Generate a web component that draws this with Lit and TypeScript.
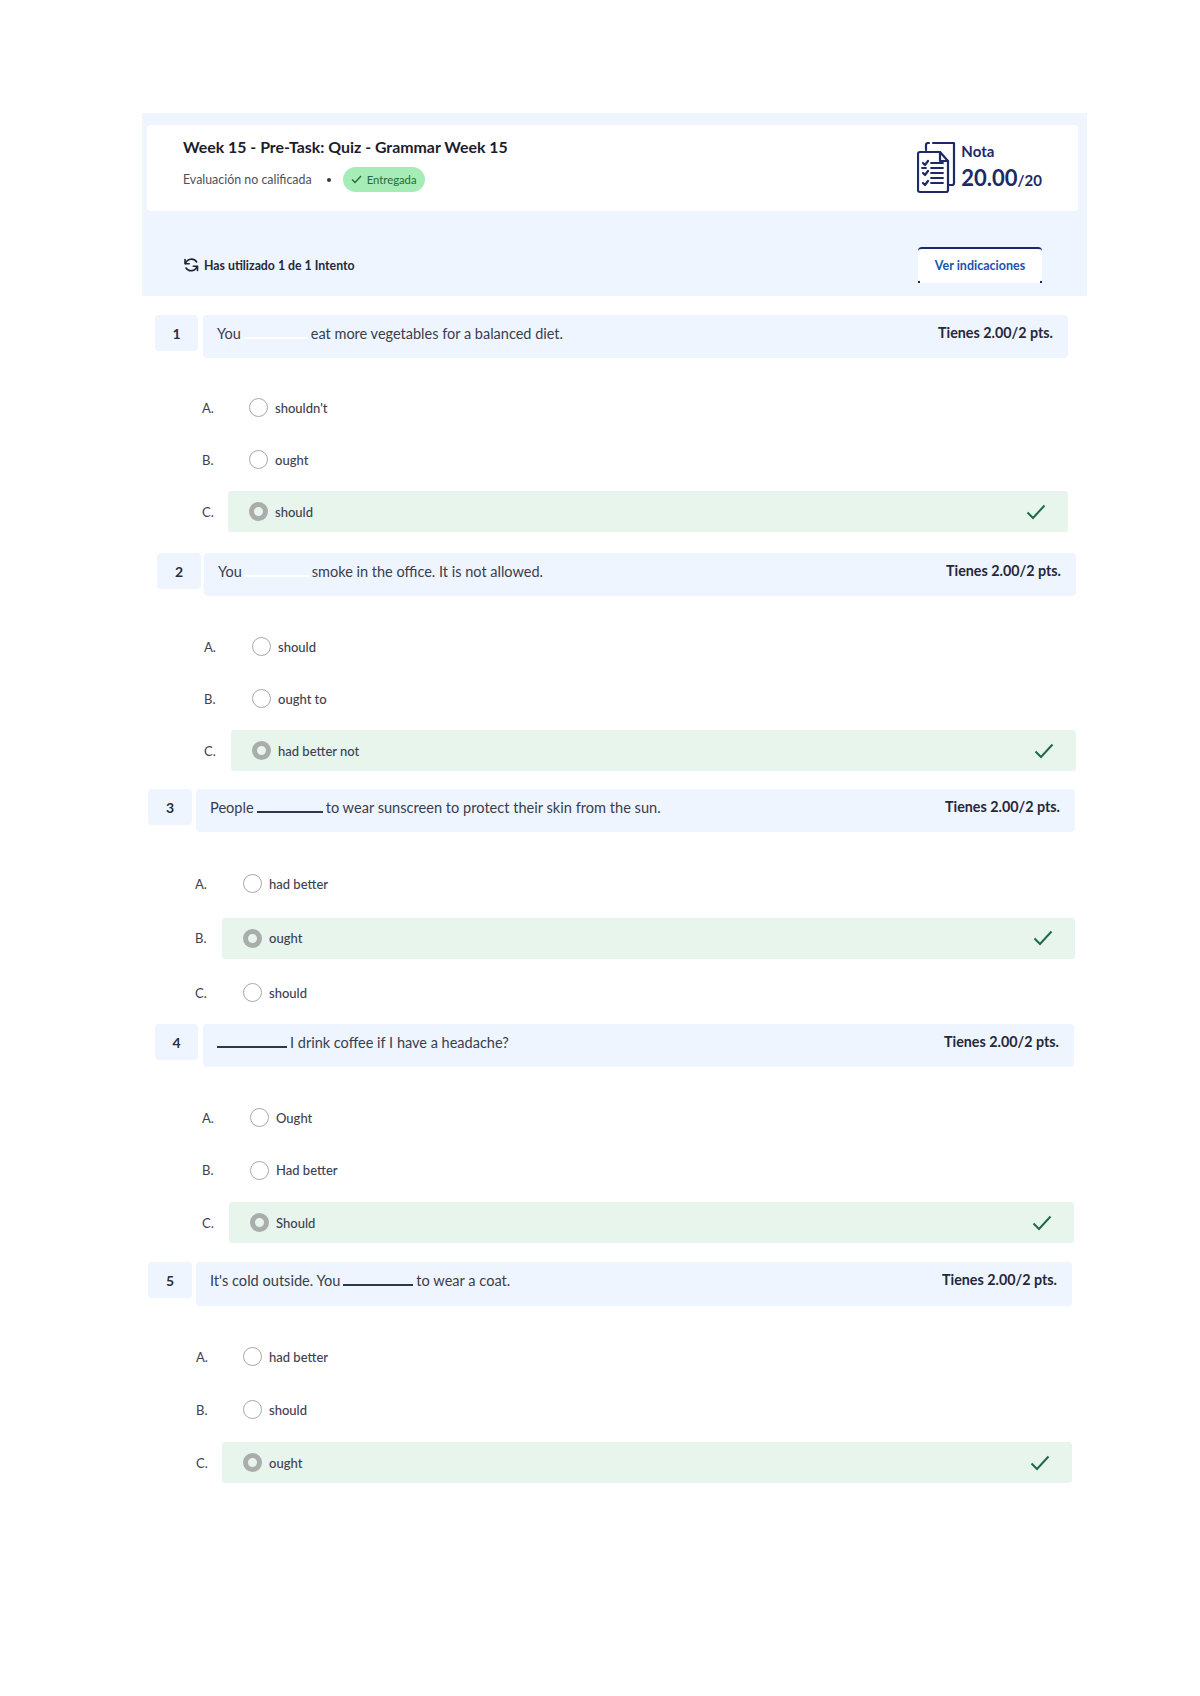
import { LitElement, html, css, svg } from 'lit';
import { customElement } from 'lit/decorators.js';

interface Option {
  letter: string;
  text: string;
  correct?: boolean;
}

interface Question {
  cls: string;
  before: string;
  after: string;
  blank: 'light' | 'dark';
  options: Option[];
}

const QUESTIONS: Question[] = [
  {
    cls: 'q1',
    before: 'You',
    after: 'eat more vegetables for a balanced diet.',
    blank: 'light',
    options: [
      { letter: 'A.', text: "shouldn't" },
      { letter: 'B.', text: 'ought' },
      { letter: 'C.', text: 'should', correct: true },
    ],
  },
  {
    cls: 'q2',
    before: 'You',
    after: 'smoke in the office. It is not allowed.',
    blank: 'light',
    options: [
      { letter: 'A.', text: 'should' },
      { letter: 'B.', text: 'ought to' },
      { letter: 'C.', text: 'had better not', correct: true },
    ],
  },
  {
    cls: 'q3',
    before: 'People',
    after: 'to wear sunscreen to protect their skin from the sun.',
    blank: 'dark',
    options: [
      { letter: 'A.', text: 'had better' },
      { letter: 'B.', text: 'ought', correct: true },
      { letter: 'C.', text: 'should' },
    ],
  },
  {
    cls: 'q4',
    before: '',
    after: 'I drink coffee if I have a headache?',
    blank: 'dark',
    options: [
      { letter: 'A.', text: 'Ought' },
      { letter: 'B.', text: 'Had better' },
      { letter: 'C.', text: 'Should', correct: true },
    ],
  },
  {
    cls: 'q5',
    before: "It's cold outside. You",
    after: 'to wear a coat.',
    blank: 'dark',
    options: [
      { letter: 'A.', text: 'had better' },
      { letter: 'B.', text: 'should' },
      { letter: 'C.', text: 'ought', correct: true },
    ],
  },
];

const gradeIcon = svg`
  <g fill="none" stroke="#1c2a66" stroke-width="2.2" stroke-linejoin="round" stroke-linecap="round">
    <path d="M9 9V4a2 2 0 0 1 2-2h1M16 2h21v40a2 2 0 0 1-2 2h-3" />
    <path d="M3 11h20l8 9v29a2 2 0 0 1-2 2H3a2 2 0 0 1-2-2V13a2 2 0 0 1 2-2z" />
    <path d="M23 11v9h8" />
    <path d="M6 22l2 2 3-4M6 32l2 2 3-4M6 42l2 2 3-4" />
    <path d="M14 22h12M14 32h12M14 42h12M5 27h4M14 27h12M14 37h12" stroke-width="1.8" />
  </g>
`;

const retryIcon = svg`
  <g fill="none" stroke="#1f2233" stroke-width="1.6" stroke-linecap="round" stroke-linejoin="round">
    <path d="M2.5 6.5A6.2 6.2 0 0 1 13.6 5" />
    <path d="M14 9.5A6.2 6.2 0 0 1 3 11" />
    <path d="M2 2.5v4.2h4.2M14.5 13.5V9.3h-4.2" />
  </g>
`;

@customElement('app-root')
export class AppRoot extends LitElement {
  static styles = css`
    :host {
      display: block;
      height: 1696px;
      background: #fff;
      font-family: 'Lato', 'Liberation Sans', sans-serif;
      color: #24273a;
      box-sizing: border-box;
      padding-top: 113px;
    }

    .panel {
      margin-left: 142px;
      width: 945px;
      height: 183px;
      box-sizing: border-box;
      background: #eef5fe;
      padding: 12px 9px 0 5px;
    }

    .card {
      display: flex;
      justify-content: space-between;
      height: 86px;
      box-sizing: border-box;
      background: #fff;
      border-radius: 4px;
      padding: 11px 36px 0 36px;
    }

    h1 {
      margin: 0;
      font-size: 15.9px;
      line-height: 22px;
      font-weight: 700;
      color: #1b1d2c;
    }

    .meta {
      display: flex;
      align-items: center;
      margin-top: 9px;
      font-size: 12.4px;
      color: #4d5060;
    }

    .dot {
      width: 4px;
      height: 4px;
      border-radius: 50%;
      background: #33364a;
      margin: 0 12px 0 15px;
    }

    .badge {
      display: flex;
      align-items: center;
      gap: 5px;
      height: 25px;
      padding: 0 8px;
      border-radius: 13px;
      background: #a5ecb6;
      color: #1f6b3d;
      font-size: 11.3px;
    }

    .grade {
      display: flex;
      gap: 5px;
      padding-top: 5px;
    }

    .grade-text {
      color: #1c2a66;
      font-weight: 700;
    }

    .grade-label {
      font-size: 15px;
      line-height: 19px;
      margin-top: 1px;
    }

    .grade-value {
      font-size: 22px;
      line-height: 30px;
      margin-top: 2px;
    }

    .grade-value small {
      font-size: 15px;
    }

    .attempts {
      display: flex;
      align-items: center;
      justify-content: space-between;
      padding: 36px 36px 0 36px;
    }

    .attempts-text {
      display: flex;
      align-items: center;
      gap: 5px;
      font-size: 12.3px;
      font-weight: 700;
      color: #26283a;
    }

    .btn {
      position: relative;
      width: 124px;
      height: 36px;
      box-sizing: border-box;
      padding: 0 0 2px;
      border: 0;
      border-top: 2px solid #1c2a66;
      border-radius: 4px 4px 0 0;
      background: #fff;
      color: #1a53ad;
      font: 700 12.5px 'Lato', 'Liberation Sans', sans-serif;
    }

    .btn::before,
    .btn::after {
      content: '';
      position: absolute;
      bottom: 0;
      width: 2px;
      height: 2px;
      background: #1c2a66;
    }

    .btn::before {
      left: 0;
    }

    .btn::after {
      right: 0;
    }

    .head {
      display: flex;
      gap: 5px;
      align-items: flex-start;
    }

    .num {
      flex: none;
      height: 36px;
      display: flex;
      align-items: center;
      justify-content: center;
      background: #eef5fe;
      border-radius: 4px;
      font-size: 14px;
      font-weight: 700;
      color: #2b2e40;
    }

    .bar {
      flex: 1;
      height: 43px;
      box-sizing: border-box;
      display: flex;
      justify-content: space-between;
      padding: 8px 15px 0 14px;
      background: #eef5fe;
      border-radius: 4px;
      font-size: 14.5px;
      line-height: 19px;
      color: #3a3d4e;
    }

    .blank {
      display: inline-block;
      width: 64px;
      height: 14px;
      margin: 0 3px;
      border-bottom: 2px solid #fff;
    }

    .blank.dark {
      border-bottom-color: #33364a;
    }

    .score {
      font-size: 14.3px;
      font-weight: 700;
      color: #26283a;
    }

    .options {
      display: flex;
      flex-direction: column;
    }

    .option {
      display: flex;
      align-items: center;
      height: 41px;
    }

    .letter {
      flex: none;
      margin-left: 47px;
      width: 26px;
      font-size: 13px;
      color: #3d4050;
    }

    .row {
      flex: 1;
      height: 41px;
      display: flex;
      align-items: center;
      gap: 7px;
      padding: 0 22px 0 21px;
      border-radius: 3px;
      font-size: 13px;
      font-weight: 500;
      color: #3d4050;
    }

    .row.correct {
      background: #e8f5ec;
    }

    .radio {
      flex: none;
      width: 19px;
      height: 19px;
      box-sizing: border-box;
      border: 1px solid #a8a8a8;
      border-radius: 50%;
    }

    .correct .radio {
      border: 5px solid #a9adab;
      background: #e8f5ec;
    }

    .check {
      margin-left: auto;
    }

    .q1 {
      margin: 19px 0 0 155px;
      width: 913px;
    }

    .q1 .options {
      padding-top: 29px;
      gap: 11px;
    }

    .q1 .num {
      width: 43px;
    }

    .q2 {
      margin: 21px 0 0 157px;
      width: 919px;
    }

    .q2 .options {
      padding-top: 30px;
      gap: 11px;
    }

    .q2 .num {
      width: 44px;
    }

    .q2 .head {
      gap: 3px;
    }

    .q2 .letter {
      width: 27px;
    }

    .q3 {
      margin: 18px 0 0 148px;
      width: 927px;
    }

    .q3 .bar {
      font-size: 14.6px;
    }

    .q3 .options {
      padding-top: 31px;
      gap: 13.5px;
    }

    .q3 .num {
      width: 44px;
    }

    .q3 .head {
      gap: 4px;
    }

    .q3 .blank {
      width: 66px;
    }

    .q3 .letter {
      width: 27px;
    }

    .q4 {
      margin: 11px 0 0 155px;
      width: 919px;
    }

    .q4 .options {
      padding-top: 30px;
      gap: 11.5px;
    }

    .q4 .num {
      width: 43px;
    }

    .q4 .blank {
      width: 70px;
      margin-left: 0;
    }

    .q4 .letter {
      width: 27px;
    }

    .q5 {
      margin: 19px 0 0 148px;
      width: 924px;
    }

    .q5 .bar {
      height: 44px;
      font-size: 14.6px;
    }

    .q5 .options {
      padding-top: 30px;
      gap: 12px;
    }

    .q5 .num {
      width: 44px;
    }

    .q5 .head {
      gap: 4px;
    }

    .q5 .blank {
      width: 70px;
    }

    .q5 .letter {
      margin-left: 48px;
    }
  `;

  renderOption(option: Option) {
    return html`
      <div class="option">
        <span class="letter">${option.letter}</span>
        <div class="row ${option.correct ? 'correct' : ''}">
          <span class="radio"></span>
          <span>${option.text}</span>
          ${option.correct
            ? html`<svg class="check" width="20" height="16" viewBox="0 0 20 16">
                <path d="M1.5 8.5l5.5 5.5L18.5 1.5" fill="none" stroke="#1f6b45" stroke-width="2" />
              </svg>`
            : ''}
        </div>
      </div>
    `;
  }

  renderQuestion(question: Question, index: number) {
    return html`
      <section class=${question.cls}>
        <div class="head">
          <div class="num">${index + 1}</div>
          <div class="bar">
            <span>
              ${question.before}<span class="blank ${question.blank}"></span>${question.after}
            </span>
            <span class="score">Tienes 2.00/2 pts.</span>
          </div>
        </div>
        <div class="options">${question.options.map(option => this.renderOption(option))}</div>
      </section>
    `;
  }

  render() {
    return html`
      <header class="panel">
        <div class="card">
          <div>
            <h1>Week 15 - Pre-Task: Quiz - Grammar Week 15</h1>
            <div class="meta">
              <span>Evaluación no calificada</span>
              <span class="dot"></span>
              <span class="badge">
                <svg width="11" height="9" viewBox="0 0 11 9">
                  <path d="M1 4.5l3 3L10 1" fill="none" stroke="#1f6b3d" stroke-width="1.3" />
                </svg>
                Entregada
              </span>
            </div>
          </div>
          <div class="grade">
            <svg width="39" height="53" viewBox="0 0 39 53">${gradeIcon}</svg>
            <div class="grade-text">
              <div class="grade-label">Nota</div>
              <div class="grade-value">20.00<small>/20</small></div>
            </div>
          </div>
        </div>
        <div class="attempts">
          <span class="attempts-text">
            <svg width="16" height="16" viewBox="0 0 16 16">${retryIcon}</svg>
            Has utilizado 1 de 1 Intento
          </span>
          <button class="btn">Ver indicaciones</button>
        </div>
      </header>
      ${QUESTIONS.map((question, index) => this.renderQuestion(question, index))}
    `;
  }
}
